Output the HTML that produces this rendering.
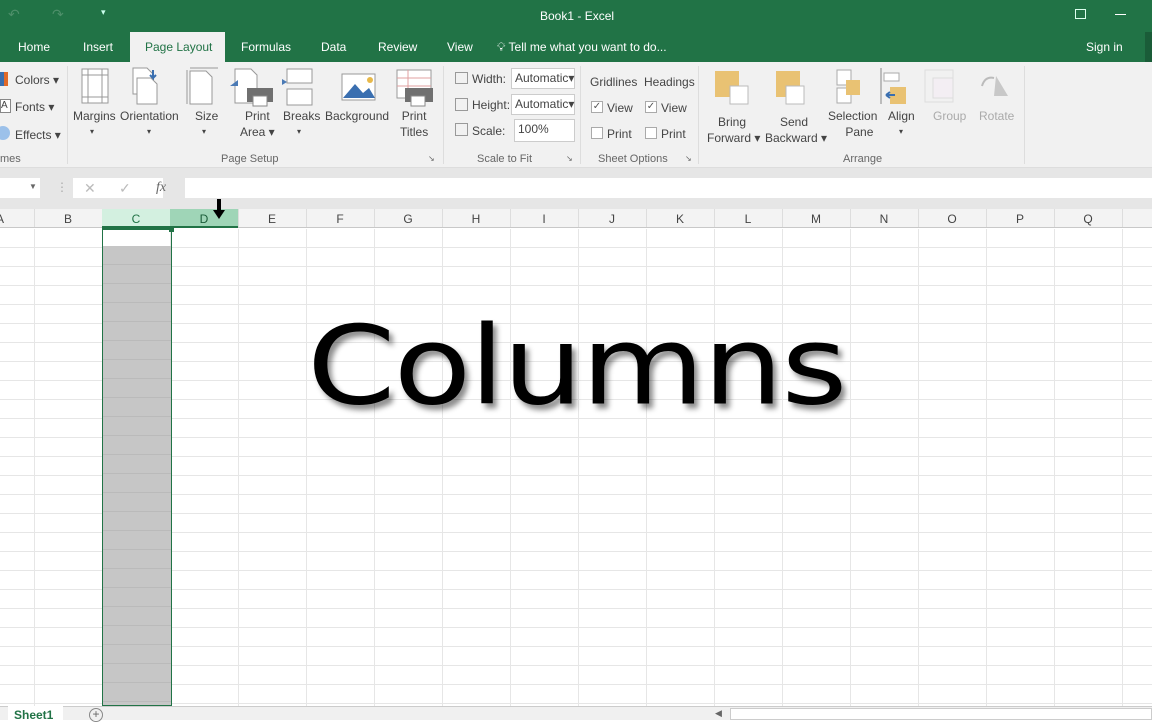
<!DOCTYPE html>
<html><head><meta charset="utf-8"><style>
*{margin:0;padding:0;box-sizing:border-box}
body{width:1152px;height:720px;overflow:hidden;position:relative;background:#fff;font-family:"Liberation Sans",sans-serif;font-size:12px;color:#444}
.a{position:absolute;white-space:nowrap}
.tab{position:absolute;top:40px;color:#fff;font-size:12px}
.lbl{position:absolute;font-size:12px;color:#444;text-align:center;line-height:16px}
.grp{position:absolute;font-size:11px;color:#666}
.hd{position:absolute;top:212px;font-size:12px;color:#444;width:68px;text-align:center}
.cb{position:absolute;width:12px;height:12px;border:1px solid #aaa;background:#fff;font-size:10px;line-height:10px;text-align:center;color:#555}
.box{position:absolute;border:1px solid #ccc;background:#fff;font-size:12px;color:#444;padding-left:3px;line-height:18px}
</style></head><body>
<div class="a" style="left:0;top:0;width:1152px;height:62px;background:#217346"></div>
<div class="a" style="left:540px;top:9px;color:#fff;font-size:12px">Book1 - Excel</div>
<div class="a" style="left:8px;top:6px;color:#4e8f6a;font-size:14px">↶</div>
<div class="a" style="left:52px;top:6px;color:#4e8f6a;font-size:14px">↷</div>
<div class="a" style="left:101px;top:7px;color:#cfe;font-size:9px">▾</div>
<div class="a" style="left:1075px;top:9px;width:11px;height:10px;border:1px solid #dfe;"></div>
<div class="a" style="left:1115px;top:14px;width:11px;height:1px;background:#fff"></div>
<div class="a" style="left:130px;top:32px;width:95px;height:30px;background:#f1f1f1"></div>
<div class="tab" style="left:18px">Home</div>
<div class="tab" style="left:83px">Insert</div>
<div class="tab" style="left:145px;color:#217346">Page Layout</div>
<div class="tab" style="left:241px">Formulas</div>
<div class="tab" style="left:321px">Data</div>
<div class="tab" style="left:378px">Review</div>
<div class="tab" style="left:447px">View</div>
<div class="tab" style="left:497px">💡︎ Tell me what you want to do...</div>
<div class="tab" style="left:1086px">Sign in</div>
<div class="a" style="left:1145px;top:32px;width:7px;height:30px;background:#1a5c38"></div>
<div class="a" style="left:0;top:62px;width:1152px;height:106px;background:#f1f1f1;border-bottom:1px solid #ddd"></div>
<div class="a" style="left:67px;top:66px;width:1px;height:98px;background:#ddd"></div>
<div class="a" style="left:443px;top:66px;width:1px;height:98px;background:#ddd"></div>
<div class="a" style="left:580px;top:66px;width:1px;height:98px;background:#ddd"></div>
<div class="a" style="left:698px;top:66px;width:1px;height:98px;background:#ddd"></div>
<div class="a" style="left:1024px;top:66px;width:1px;height:98px;background:#ddd"></div>
<div class="a" style="left:0;top:72px;width:8px;height:14px;background:linear-gradient(90deg,#3a6fb0 50%,#e06a2a 50%)"></div>
<div class="lbl" style="left:15px;top:72px">Colors ▾</div>
<div class="a" style="left:0;top:99px;width:11px;height:14px;border:1px solid #888;background:#fff;font-size:10px">A</div>
<div class="lbl" style="left:15px;top:99px">Fonts ▾</div>
<div class="a" style="left:-4px;top:126px;width:14px;height:14px;border-radius:50%;background:#9cc1ea"></div>
<div class="lbl" style="left:15px;top:127px">Effects ▾</div>
<div class="grp" style="left:0;top:153px">mes</div>
<svg class="a" style="left:70px;top:66px" width="370" height="46">
<g fill="#fff" stroke="#999"><rect x="12" y="3" width="26" height="34"/><line x1="18" y1="3" x2="18" y2="37"/><line x1="32" y1="3" x2="32" y2="37"/><line x1="12" y1="9" x2="38" y2="9"/><line x1="12" y1="31" x2="38" y2="31"/>
<path d="M63 2h14l6 6v20H63z"/><path d="M67 12h14l6 6v20H67z"/>
<path d="M120 5h16l6 6v27h-22z"/><line x1="117" y1="4" x2="117" y2="38"/><line x1="120" y1="2" x2="148" y2="2"/>
<path d="M165 3h16l6 6v28h-22z"/><rect x="217" y="3" width="25" height="14"/><rect x="217" y="23" width="25" height="16"/>
<rect x="272" y="8" width="33" height="26"/><rect x="327" y="4" width="34" height="28"/></g>
<path d="M160 20 l8 -6 0 6z" fill="#4a7ab5"/><path d="M83 4 v8 l-3 -3 m3 3 l3 -3" stroke="#3a6fb0" stroke-width="2" fill="none"/>
<rect x="177" y="22" width="26" height="14" fill="#707070"/><rect x="183" y="30" width="14" height="10" fill="#fff" stroke="#888"/>
<path d="M212 13l5 3-5 3z" fill="#4a7ab5"/>
<path d="M273 32 l12 -14 8 9 6 -5 6 10z" fill="#3a6fb0"/><circle cx="300" cy="14" r="3" fill="#e8b94a"/>
<g stroke="#e0a0a0"><line x1="327" y1="12" x2="361" y2="12"/><line x1="327" y1="20" x2="361" y2="20"/><line x1="338" y1="4" x2="338" y2="32"/></g>
<rect x="335" y="22" width="28" height="14" fill="#707070"/><rect x="341" y="30" width="14" height="10" fill="#fff" stroke="#888"/>
</svg>
<div class="lbl" style="left:73px;top:108px">Margins</div><div class="lbl" style="left:90px;top:124px;font-size:8px">▾</div>
<div class="lbl" style="left:120px;top:108px">Orientation</div><div class="lbl" style="left:147px;top:124px;font-size:8px">▾</div>
<div class="lbl" style="left:195px;top:108px">Size</div><div class="lbl" style="left:202px;top:124px;font-size:8px">▾</div>
<div class="lbl" style="left:240px;top:108px">Print<br>Area ▾</div>
<div class="lbl" style="left:283px;top:108px">Breaks</div><div class="lbl" style="left:297px;top:124px;font-size:8px">▾</div>
<div class="lbl" style="left:325px;top:108px">Background</div>
<div class="lbl" style="left:400px;top:108px">Print<br>Titles</div>
<div class="grp" style="left:221px;top:153px">Page Setup</div>
<div class="grp" style="left:428px;top:154px;font-size:8px">↘</div>
<div class="a" style="left:455px;top:72px;width:13px;height:12px;border:1px solid #999"></div>
<div class="lbl" style="left:472px;top:71px">Width:</div><div class="box" style="left:511px;top:68px;width:64px;height:21px">Automatic▾</div>
<div class="a" style="left:455px;top:98px;width:13px;height:13px;border:1px solid #999"></div>
<div class="lbl" style="left:472px;top:97px">Height:</div><div class="box" style="left:511px;top:94px;width:64px;height:21px">Automatic▾</div>
<div class="a" style="left:455px;top:123px;width:13px;height:13px;border:1px solid #999"></div>
<div class="lbl" style="left:472px;top:123px">Scale:</div><div class="box" style="left:514px;top:119px;width:61px;height:23px;padding-left:3px">100%</div>
<div class="grp" style="left:477px;top:153px">Scale to Fit</div>
<div class="grp" style="left:566px;top:154px;font-size:8px">↘</div>
<div class="lbl" style="left:590px;top:74px">Gridlines</div><div class="lbl" style="left:644px;top:74px">Headings</div>
<div class="cb" style="left:591px;top:101px">✓</div><div class="lbl" style="left:607px;top:100px">View</div>
<div class="cb" style="left:645px;top:101px">✓</div><div class="lbl" style="left:661px;top:100px">View</div>
<div class="cb" style="left:591px;top:127px"></div><div class="lbl" style="left:607px;top:126px">Print</div>
<div class="cb" style="left:645px;top:127px"></div><div class="lbl" style="left:661px;top:126px">Print</div>
<div class="grp" style="left:598px;top:153px">Sheet Options</div>
<div class="grp" style="left:685px;top:154px;font-size:8px">↘</div>
<svg class="a" style="left:700px;top:64px" width="320" height="50">
<rect x="15" y="7" width="24" height="26" fill="#e9c273"/><rect x="30" y="22" width="18" height="18" fill="#fff" stroke="#bbb"/>
<rect x="76" y="7" width="24" height="26" fill="#e9c273"/><rect x="86" y="22" width="18" height="18" fill="#fff" stroke="#bbb"/>
<rect x="137" y="6" width="14" height="15" fill="#fff" stroke="#aaa"/><rect x="137" y="24" width="14" height="15" fill="#fff" stroke="#aaa"/><rect x="146" y="16" width="14" height="15" fill="#e9c273"/>
<line x1="181" y1="4" x2="181" y2="40" stroke="#888"/><rect x="184" y="9" width="15" height="8" fill="#fff" stroke="#aaa"/><rect x="190" y="23" width="16" height="17" fill="#e9c273"/><path d="M186 31h9M186 31l4-3M186 31l4 3" stroke="#3a6fb0" stroke-width="2"/>
<rect x="225" y="6" width="28" height="32" fill="none" stroke="#ddd"/><rect x="233" y="14" width="20" height="20" fill="#f3eef3" stroke="#ddd"/>
<path d="M296 12 l12 20 h-14z" fill="#c8c8c8"/><path d="M282 22 q3-10 12-8" stroke="#bbb" stroke-width="2" fill="none"/>
</svg>
<div class="lbl" style="left:718px;top:114px">Bring</div><div class="lbl" style="left:707px;top:130px">Forward ▾</div>
<div class="lbl" style="left:780px;top:114px">Send</div><div class="lbl" style="left:765px;top:130px">Backward ▾</div>
<div class="lbl" style="left:828px;top:108px">Selection<br>&nbsp;&nbsp;&nbsp;&nbsp;Pane</div>
<div class="lbl" style="left:888px;top:108px">Align</div><div class="lbl" style="left:899px;top:124px;font-size:8px">▾</div>
<div class="lbl" style="left:933px;top:108px;color:#aaa">Group</div>
<div class="lbl" style="left:979px;top:108px;color:#aaa">Rotate</div>
<div class="grp" style="left:843px;top:153px">Arrange</div>
<div class="a" style="left:0;top:168px;width:1152px;height:42px;background:#e6e6e6"></div>
<div class="a" style="left:0;top:178px;width:40px;height:20px;background:#fff"></div>
<div class="a" style="left:29px;top:182px;font-size:8px;color:#666">▼</div>
<div class="a" style="left:56px;top:180px;color:#aaa">⋮</div>
<div class="a" style="left:73px;top:178px;width:90px;height:20px;background:#fff"></div>
<div class="a" style="left:84px;top:180px;color:#bbb;font-size:14px">✕</div>
<div class="a" style="left:119px;top:180px;color:#bbb;font-size:14px">✓</div>
<div class="a" style="left:156px;top:180px;color:#666;font-style:italic;font-family:'Liberation Serif',serif;font-size:14px">fx</div>
<div class="a" style="left:185px;top:178px;width:967px;height:20px;background:#fff"></div>
<div class="a" style="left:0;top:209px;width:1152px;height:19px;background:#f3f3f3;border-bottom:1px solid #c8c8c8;background-image:repeating-linear-gradient(90deg,transparent 0 34px,#ddd 34px 35px,transparent 35px 68px)"></div>
<div class="a" style="left:102px;top:209px;width:68px;height:19px;background:#d3f0e0;border-bottom:2px solid #217346"></div>
<div class="a" style="left:170px;top:209px;width:68px;height:19px;background:#9fd5b7;border-bottom:2px solid #217346"></div>
<div class="hd" style="left:-34px">A</div><div class="hd" style="left:34px">B</div><div class="hd" style="left:102px;color:#217346">C</div><div class="hd" style="left:170px;color:#1a5c38">D</div>
<div class="hd" style="left:238px">E</div><div class="hd" style="left:306px">F</div><div class="hd" style="left:374px">G</div><div class="hd" style="left:442px">H</div><div class="hd" style="left:510px">I</div><div class="hd" style="left:578px">J</div><div class="hd" style="left:646px">K</div><div class="hd" style="left:714px">L</div><div class="hd" style="left:782px">M</div><div class="hd" style="left:850px">N</div><div class="hd" style="left:918px">O</div><div class="hd" style="left:986px">P</div><div class="hd" style="left:1054px">Q</div>
<svg class="a" style="left:211px;top:199px" width="16" height="22"><rect x="6" y="0" width="4" height="12" fill="#000"/><path d="M2 11h12l-6 9z" fill="#000"/></svg>
<div class="a" style="left:0;top:229px;width:1152px;height:477px;background-image:repeating-linear-gradient(180deg,transparent 0 18px,#e6e6e6 18px 19px),repeating-linear-gradient(90deg,transparent 0 34px,#e6e6e6 34px 35px,transparent 35px 68px)"></div>
<div class="a" style="left:102px;top:246px;width:69px;height:460px;background:#c6c6c6;background-image:repeating-linear-gradient(180deg,transparent 0 18px,#bababa 18px 19px)"></div>
<div class="a" style="left:102px;top:228px;width:70px;height:478px;border:1px solid #217346;border-top-width:2px"></div>
<div class="a" style="left:169px;top:227px;width:5px;height:5px;background:#217346"></div>
<div class="a" style="left:307px;top:302px;font-family:'DejaVu Sans','Liberation Sans',sans-serif;font-size:127px;color:#000;letter-spacing:-2px;text-shadow:4px 6px 6px rgba(0,0,0,.45);transform:scaleY(0.86);transform-origin:0 0">Columns</div>
<div class="a" style="left:0;top:706px;width:1152px;height:14px;background:#f0f0f0;border-top:1px solid #ccc"></div>
<div class="a" style="left:8px;top:706px;width:55px;height:14px;background:#fff;color:#217346;font-weight:bold;font-size:12px;padding-left:6px;line-height:18px">Sheet1</div>
<div class="a" style="left:89px;top:708px;width:14px;height:14px;border:1px solid #888;border-radius:50%;font-size:12px;line-height:11px;text-align:center;color:#666">+</div>
<div class="a" style="left:715px;top:708px;font-size:9px;color:#666">◀</div>
<div class="a" style="left:730px;top:708px;width:422px;height:12px;background:#fff;border:1px solid #ccc"></div>
</body></html>
